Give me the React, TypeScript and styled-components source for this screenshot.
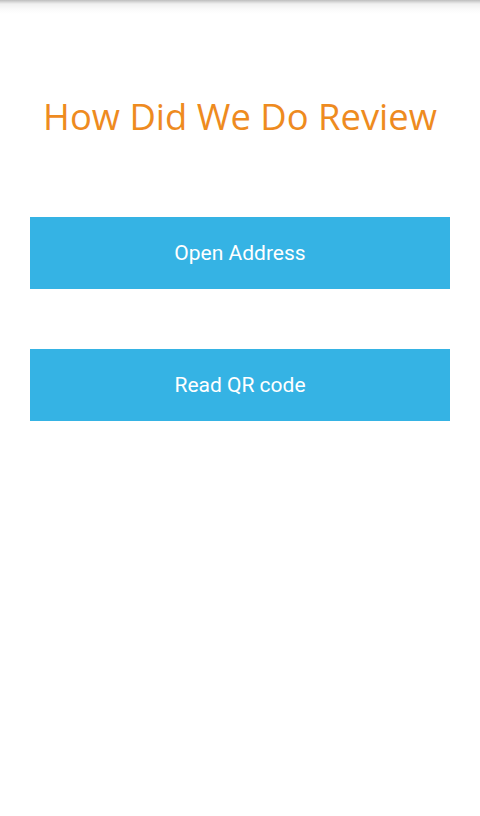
import React from "react";
import styled, { createGlobalStyle } from "styled-components";

const GlobalStyle = createGlobalStyle`
  html, body {
    margin: 0;
    padding: 0;
    background: #ffffff;
  }
`;

const Screen = styled.div`
  width: 480px;
  height: 816px;
  background: #ffffff;
  display: flex;
  flex-direction: column;
  align-items: center;
`;

// thin shadow left by the system bar at the very top
const TopShade = styled.div`
  width: 100%;
  height: 14px;
  background: linear-gradient(#bdbdbd 0px, #d8d8d8 2px, #f0f0f0 4px, #fafafa 9px, #ffffff 14px);
`;

const Title = styled.h1`
  margin: 80px 0 0;
  font-family: "Open Sans", "Noto Sans", sans-serif;
  font-weight: 400;
  font-size: 36.4px;
  line-height: 44px;
  color: #ee8b1f;
`;

const Actions = styled.div`
  width: 420px;
  margin-top: 79px;
  display: flex;
  flex-direction: column;
  gap: 60px;
`;

const ActionButton = styled.button`
  height: 72px;
  width: 100%;
  border: 0;
  background: #35b3e4;
  color: #ffffff;
  font-family: Roboto, "Liberation Sans", sans-serif;
  font-size: 21px;
  cursor: pointer;
  outline: none;
`;

const App: React.FC = () => {
  return (
    <>
      <GlobalStyle />
      <Screen>
        <TopShade />
        <Title>How Did We Do Review</Title>
        <Actions>
          <ActionButton type="button">Open Address</ActionButton>
          <ActionButton type="button">Read QR code</ActionButton>
        </Actions>
      </Screen>
    </>
  );
};

export default App;
